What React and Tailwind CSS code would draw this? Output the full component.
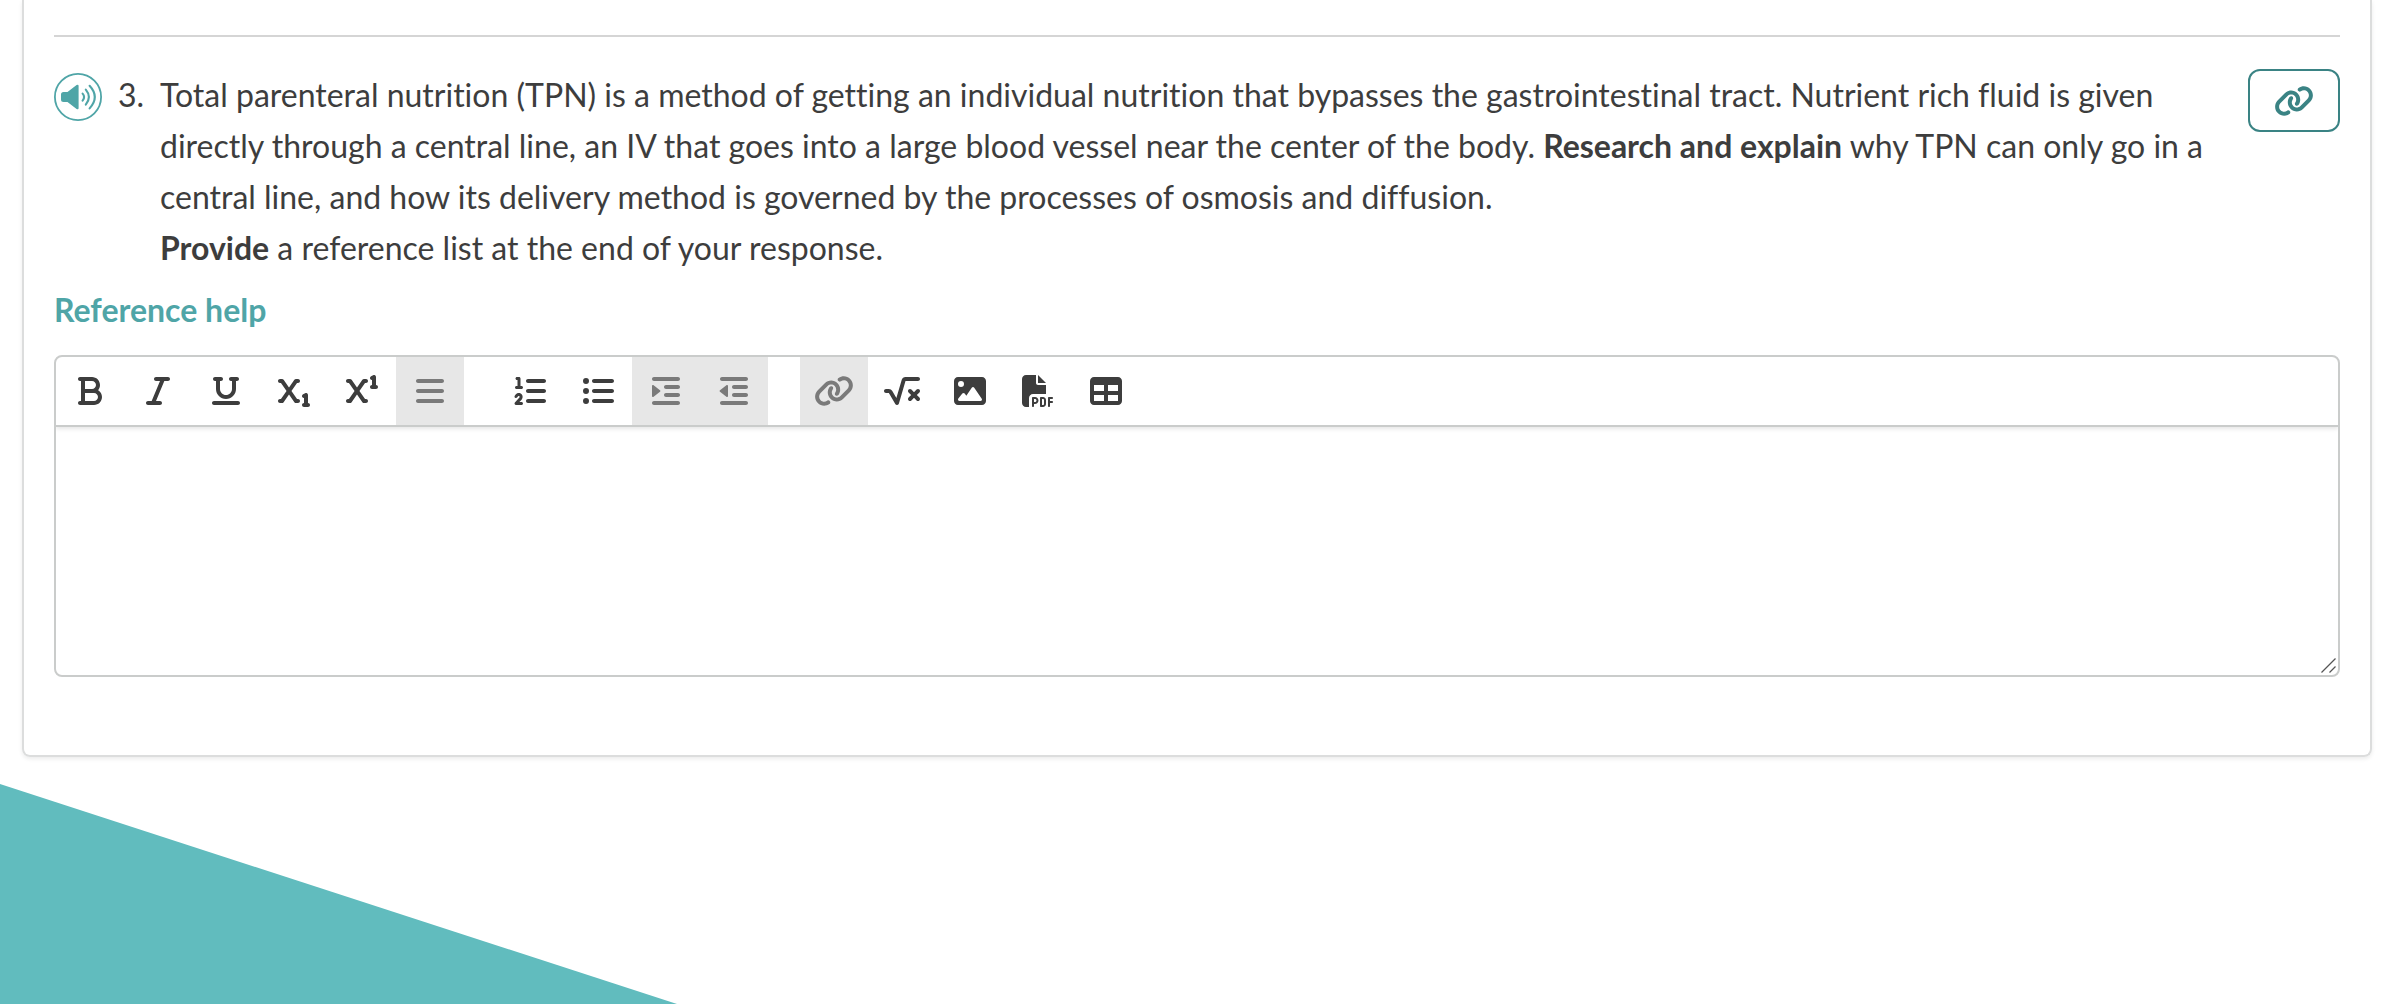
import React, { useState } from 'react';
import {
  FaBars,
  FaBold,
  FaFilePdf,
  FaImage,
  FaIndent,
  FaItalic,
  FaLink,
  FaListOl,
  FaListUl,
  FaOutdent,
  FaSquareRootVariable,
  FaSubscript,
  FaSuperscript,
  FaTable,
  FaUnderline,
} from 'react-icons/fa6';

// Toolbar buttons, grouped the way they are spaced in the editor
const toolbarGroups = [
  [
    { label: 'Bold', icon: FaBold },
    { label: 'Italic', icon: FaItalic },
    { label: 'Underline', icon: FaUnderline },
    { label: 'Subscript', icon: FaSubscript },
    { label: 'Superscript', icon: FaSuperscript },
    { label: 'Align', icon: FaBars, disabled: true },
  ],
  [
    { label: 'Numbered list', icon: FaListOl },
    { label: 'Bulleted list', icon: FaListUl },
    { label: 'Increase indent', icon: FaIndent, disabled: true },
    { label: 'Decrease indent', icon: FaOutdent, disabled: true },
  ],
  [
    { label: 'Insert link', icon: FaLink, disabled: true },
    { label: 'Insert formula', icon: FaSquareRootVariable },
    { label: 'Insert image', icon: FaImage },
    { label: 'Insert PDF', icon: FaFilePdf },
    { label: 'Insert table', icon: FaTable },
  ],
];

function ListenButton() {
  return (
    <button type="button" aria-label="Listen" className="mt-1 shrink-0 text-[#4fa5a7]">
      <svg viewBox="0 0 48 48" className="block size-12" fill="none" stroke="currentColor" strokeLinecap="round">
        <circle cx="24" cy="24" r="23.1" strokeWidth="1.8" />
        <path
          d="M9.5 19H13.5L22.6 12Q24.6 11 24.6 13V35Q24.6 37 22.6 36L13.5 29H9.5Q7 29 7 26.5V21.5Q7 19 9.5 19Z"
          fill="currentColor"
          stroke="none"
        />
        <path d="M28.6 20.6Q31.6 24 28.6 27.6M31.8 16.6Q38 24 31.8 31.6M35.6 12.8Q46 24 35.6 35.4" strokeWidth="2.1" />
      </svg>
    </button>
  );
}

function Toolbar() {
  return (
    <div role="toolbar" className="flex flex-wrap gap-8 border-b-2 border-[#cacccb] shadow-[0_2px_4px_rgba(0,0,0,0.1)]">
      {toolbarGroups.map((group, index) => (
        <div key={index} className="flex">
          {group.map(({ label, icon: Icon, disabled }) => (
            <button
              key={label}
              type="button"
              aria-label={label}
              disabled={disabled}
              className="flex size-17 items-center justify-center text-[#3d3d3d] disabled:bg-[#e7e7e7] disabled:text-[#7a7a7a]"
            >
              {/* 40px wide so the wide glyphs keep the same height as the rest */}
              <Icon className="h-8 w-10" />
            </button>
          ))}
        </div>
      ))}
    </div>
  );
}

function Editor() {
  const [answer, setAnswer] = useState('');

  return (
    <div className="relative mt-5 overflow-hidden rounded-lg border-2 border-[#cacccb]">
      <Toolbar />
      <textarea
        aria-label="Your response"
        value={answer}
        onChange={(e) => setAnswer(e.target.value)}
        className="block h-62 w-full resize-none px-4 py-3 outline-none"
      />
      {/* resize grip */}
      <svg viewBox="0 0 16 16" className="pointer-events-none absolute right-0.5 bottom-0.5 size-4 text-[#555]" stroke="currentColor" strokeWidth="1.3">
        <path d="M1.5 15.5L15.5 1.5M9.5 15.5L15.5 9.5" />
      </svg>
    </div>
  );
}

export default function App() {
  return (
    <div className="min-h-screen overflow-hidden bg-white font-[Lato,sans-serif] text-[32px] leading-[51px] text-[#3d3d3d] [font-variant-ligatures:none]">
      <main className="mr-3.5 ml-[22px] rounded-b-lg border-x-2 border-b-2 border-[#dcdddd] px-[30px] pt-[35px] pb-[78px] shadow-[0_2px_4px_rgba(0,0,0,0.08)]">
        <hr className="border-t-2 border-[#d5d5d5]" />

        <section className="mt-8 flex items-start">
          <ListenButton />
          <span className="ml-4 w-[42px] shrink-0">3.</span>
          <div className="mr-10 flex-1">
            <p>
              Total parenteral nutrition (TPN) is a method of getting an individual nutrition that bypasses the
              gastrointestinal tract. Nutrient rich fluid is given directly through a central line, an IV that goes into
              a large blood vessel near the center of the body. <strong>Research and explain</strong> why TPN can only
              go in a central line, and how its delivery method is governed by the processes of osmosis and diffusion.
            </p>
            <p>
              <strong>Provide</strong> a reference list at the end of your response.
            </p>
          </div>
          <button
            type="button"
            aria-label="Copy link"
            className="flex h-[63px] w-[92px] shrink-0 items-center justify-center rounded-xl border-2 border-[#3a8384] text-[#3a8384]"
          >
            <FaLink className="h-8 w-10" />
          </button>
        </section>

        <a href="#reference-help" className="mt-[11px] block w-fit font-bold text-[#4fa5a7]">
          Reference help
        </a>

        <Editor />
      </main>

      <svg viewBox="0 0 677 220" className="mt-[27px] block w-[677px] text-[#61bcbe]" fill="currentColor" aria-hidden="true">
        <path d="M0 0L677 220H0Z" />
      </svg>
    </div>
  );
}
